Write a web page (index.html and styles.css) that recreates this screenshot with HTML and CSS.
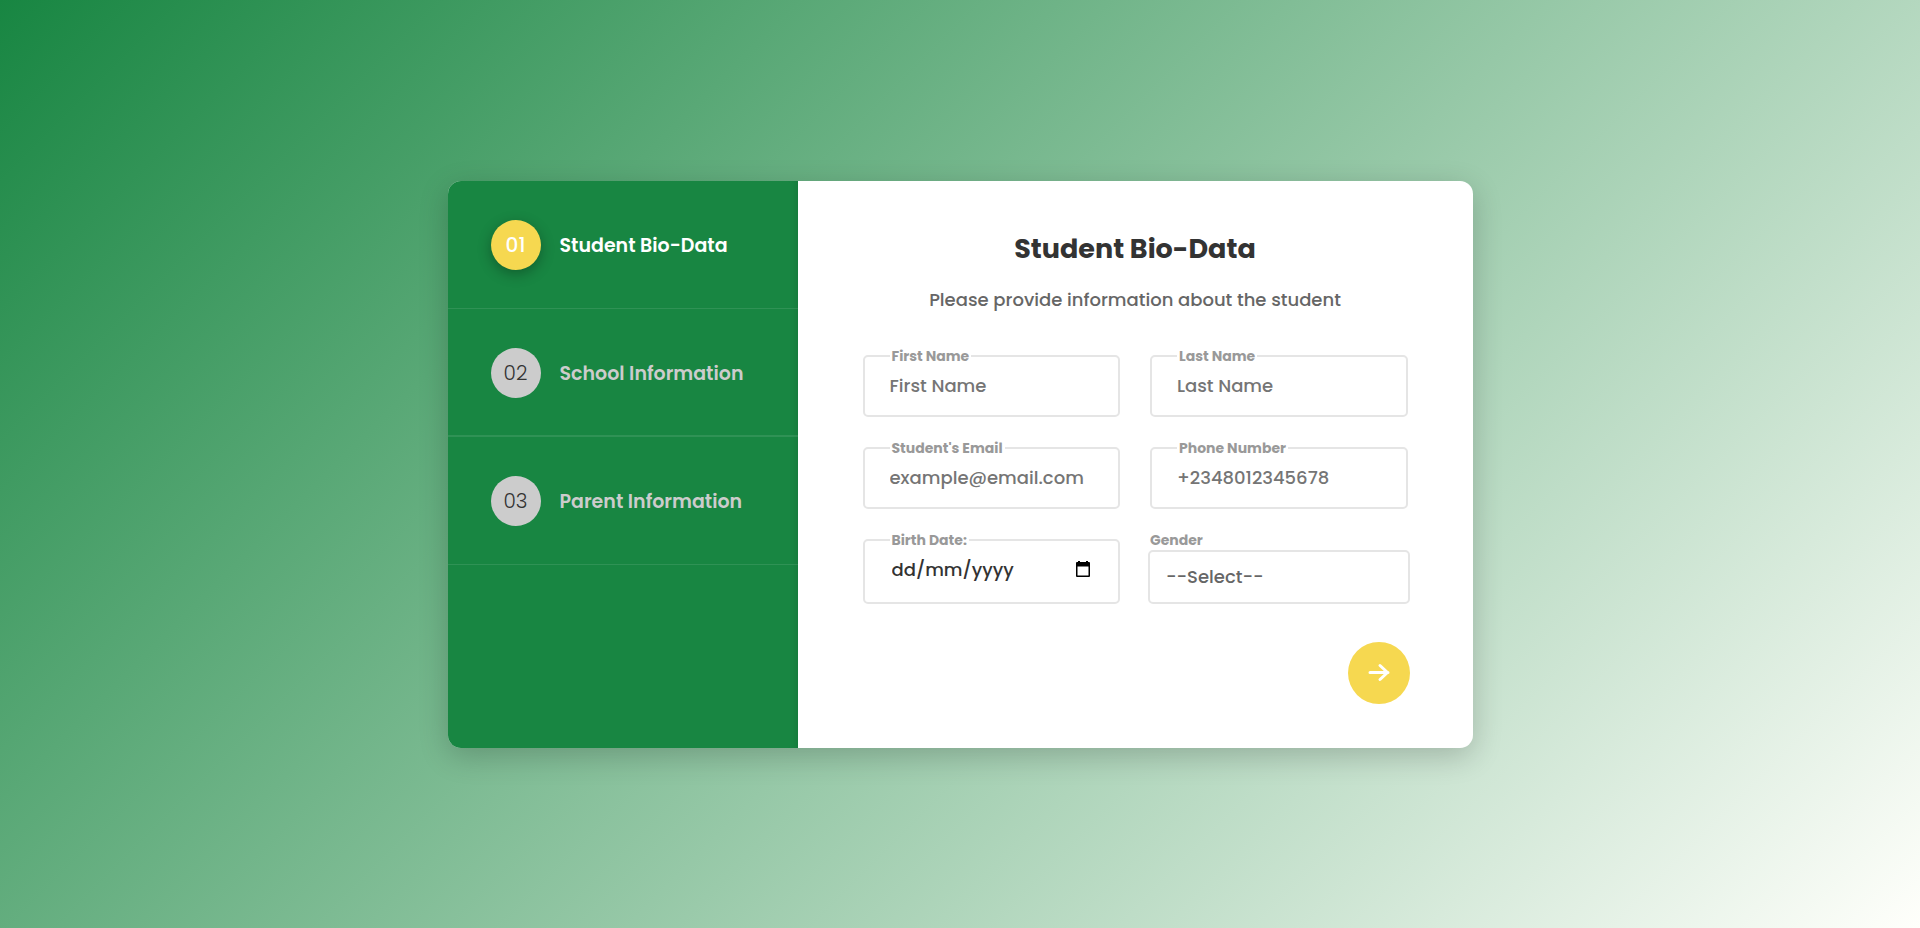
FILE: index.html
```html
<!DOCTYPE html>
<html lang="en-GB">
<head>
    <meta charset="UTF-8">
    <meta name="viewport" content="width=device-width, initial-scale=1.0">
    <title>Student Registration</title>
    <link rel="stylesheet" href="styles.css">
</head>
<body>
    <main class="card">
        <!-- Steps -->
        <ol class="steps">
            <li class="step active">
                <span class="step-number">01</span>
                <span class="step-name">Student Bio-Data</span>
            </li>
            <li class="step">
                <span class="step-number">02</span>
                <span class="step-name">School Information</span>
            </li>
            <li class="step">
                <span class="step-number">03</span>
                <span class="step-name">Parent Information</span>
            </li>
        </ol>

        <!-- Step 1 form -->
        <form class="form">
            <h1>Student Bio-Data</h1>
            <p class="intro">Please provide information about the student</p>

            <div class="fields">
                <fieldset class="field">
                    <legend><label for="firstName">First Name</label></legend>
                    <input type="text" id="firstName" placeholder="First Name">
                </fieldset>
                <fieldset class="field">
                    <legend><label for="lastName">Last Name</label></legend>
                    <input type="text" id="lastName" placeholder="Last Name">
                </fieldset>
                <fieldset class="field">
                    <legend><label for="email">Student's Email</label></legend>
                    <input type="email" id="email" placeholder="example@email.com">
                </fieldset>
                <fieldset class="field">
                    <legend><label for="phone">Phone Number</label></legend>
                    <input type="tel" id="phone" placeholder="+2348012345678">
                </fieldset>
                <fieldset class="field">
                    <legend><label for="birthDate">Birth Date:</label></legend>
                    <div class="date">
                        <input type="text" id="birthDate" inputmode="numeric" placeholder="dd/mm/yyyy">
                        <button type="button" class="calendar" aria-label="Open calendar">
                            <svg width="16" height="16" viewBox="0 0 16 16">
                                <path d="M3 0h2v1h6V0h2v1h1a1 1 0 0 1 1 1v13a1 1 0 0 1-1 1H2a1 1 0 0 1-1-1V2a1 1 0 0 1 1-1h1zM2.500 5.500v9h11v-9z" fill-rule="evenodd"/>
                            </svg>
                        </button>
                    </div>
                </fieldset>
                <div class="field-select">
                    <label for="gender">Gender</label>
                    <select id="gender">
                        <option value="">--Select--</option>
                        <option>Male</option>
                        <option>Female</option>
                    </select>
                </div>
            </div>

            <button type="submit" class="next" aria-label="Next">
                <svg width="24" height="24" viewBox="0 0 24 24" fill="none" stroke="#fff" stroke-width="3" stroke-linecap="round" stroke-linejoin="round">
                    <path d="M3 11.500h18M13 4.500l7.500 7-7.500 7"/>
                </svg>
            </button>
        </form>
    </main>
</body>
</html>
```
FILE: styles.css
```css
* {
    box-sizing: border-box;
    margin: 0;
    padding: 0;
}
body {
    min-height: 100vh;
    display: flex;
    align-items: center;
    justify-content: center;
    font-family: Poppins, Inter, sans-serif;
    font-weight: 500;
    color: #333;
    background: linear-gradient(135deg, #188642, #fffffb);
}
.card {
    display: flex;
    width: 100%;
    max-width: 1025px;
    border-radius: 13px;
    overflow: hidden;
    background-color: #fff;
    box-shadow: 0 8px 30px rgba(0, 0, 0, 0.2);
}

/* Steps */
.steps {
    flex: 0 0 350px;
    list-style: none;
    background-color: #188642;
    box-shadow: inset -8px 0 8px -8px rgba(0, 0, 0, 0.15);
}
.step {
    display: flex;
    align-items: center;
    gap: 19px;
    height: 128px;
    padding: 1px 43px 0;
    border-bottom: 1px solid rgba(255, 255, 255, 0.1);
    color: #ccc;
}
.step:nth-child(2) {
    padding-top: 2px;
    border-bottom-width: 2px;
}
.step-number {
    width: 50px;
    height: 50px;
    border-radius: 50%;
    background-color: #ccc;
    color: #333;
    font-size: 20px;
    font-weight: 300;
    line-height: 50px;
    text-align: center;
}
.step-name {
    padding-top: 2px;
    font-size: 19px;
    font-weight: 600;
    line-height: 28px;
}
.step.active {
    color: #fff;
}
.step.active .step-number {
    background-color: #f6d850;
    color: #fff;
    font-weight: 500;
    box-shadow: 0 4px 14px rgba(0, 0, 0, 0.3);
}

/* Form */
.form {
    flex: 1;
    display: flex;
    flex-direction: column;
    padding: 47px 65px 44px;
}
h1 {
    font-size: 27px;
    font-weight: 700;
    line-height: 42px;
    text-align: center;
}
.intro {
    margin-top: 17px;
    color: #666;
    font-size: 18px;
    line-height: 26px;
    text-align: center;
}
.fields {
    display: grid;
    grid-template-columns: 1fr 1fr;
    gap: 23px 30px;
    margin-top: 35px;
}
.field {
    min-width: 0;
    border: 2px solid #e5e5e5;
    border-radius: 5px;
    padding: 0 25px 9px;
}
.field legend {
    padding: 0 2px;
}
.field legend,
.field-select label {
    color: #999;
    font-size: 14px;
    font-weight: 700;
    line-height: 17px;
}
.field input {
    display: block;
    width: 100%;
    height: 41px;
    border: none;
    outline: none;
    background: none;
    color: #333;
    font: inherit;
    font-size: 18px;
}
.field input::placeholder {
    color: #757575;
}
.field .date {
    display: flex;
    align-items: center;
    padding: 0 2px 3px;
}
.field .date input {
    flex: 1;
    min-width: 0;
}
.field .date input::placeholder {
    color: #333;
}
.calendar {
    display: flex;
    border: none;
    background: none;
    cursor: pointer;
}
.field-select {
    display: flex;
    flex-direction: column;
    gap: 1px;
}
.field-select select {
    height: 54px;
    margin: 0 -2px;
    padding: 0 16px;
    border: 2px solid #e5e5e5;
    border-radius: 5px;
    appearance: none;
    background-color: #fff;
    color: #666;
    font: inherit;
    font-size: 18px;
}
.next {
    display: flex;
    align-items: center;
    justify-content: center;
    align-self: flex-end;
    width: 62px;
    height: 62px;
    margin: 38px -2px 0 0;
    border: none;
    border-radius: 50%;
    background-color: #f6d850;
    cursor: pointer;
}
```
